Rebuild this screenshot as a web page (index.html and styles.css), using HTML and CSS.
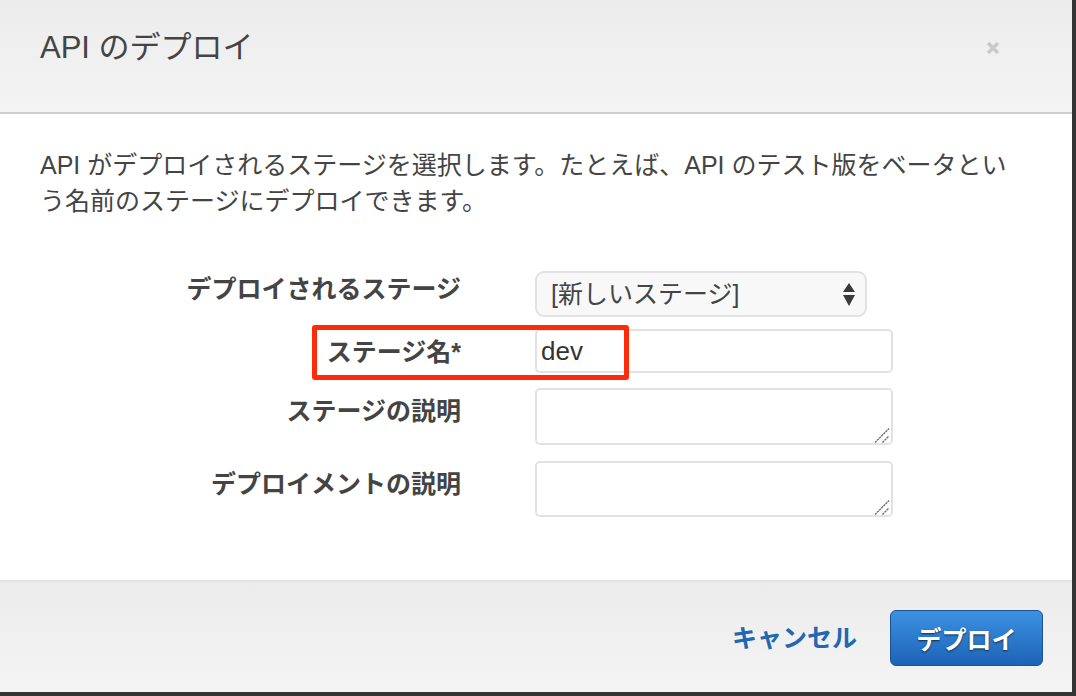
FILE: index.html
```html
<!DOCTYPE html>
<html lang="ja">
<head>
<meta charset="utf-8">
<title>API のデプロイ</title>
<link rel="stylesheet" href="styles.css">
</head>
<body>
<div class="modal">
  <header class="modal-header">
    <h1 class="modal-title">API のデプロイ</h1>
    <span class="close" aria-label="閉じる">
      <svg width="14" height="14" viewBox="0 0 14 14"><path d="M2 2L12 12M12 2L2 12" stroke="#c9c9c9" stroke-width="3.4" stroke-linecap="butt"/></svg>
    </span>
  </header>
  <main class="modal-body">
    <p class="desc">API がデプロイされるステージを選択します。たとえば、API のテスト版をベータという名前のステージにデプロイできます。</p>
    <form class="form">
      <div class="form-row">
        <label class="form-label label-first">デプロイされるステージ</label>
        <div class="select-box">
          <span class="select-text">[新しいステージ]</span>
          <svg class="select-arrows" width="12" height="23" viewBox="0 0 12 23"><path d="M6 0L12 9H0Z M0 12H12L6 23Z" fill="#3a3a3a"/></svg>
        </div>
      </div>
      <div class="form-row row-name">
        <label class="form-label">ステージ名*</label>
        <input class="text-input" type="text" value="dev">
      </div>
      <div class="form-row row-desc">
        <label class="form-label">ステージの説明</label>
        <div class="area-wrap">
          <textarea class="text-area"></textarea>
          <svg class="grip" width="16" height="16" viewBox="0 0 16 16"><path d="M1 15.5L15 1.5M8.5 15.5L15 9" stroke="#6a6a6a" stroke-width="1.4" stroke-dasharray="2.2 0.8"/></svg>
        </div>
      </div>
      <div class="form-row row-deploy-desc">
        <label class="form-label">デプロイメントの説明</label>
        <div class="area-wrap">
          <textarea class="text-area area-last"></textarea>
          <svg class="grip" width="16" height="16" viewBox="0 0 16 16"><path d="M1 15.5L15 1.5M8.5 15.5L15 9" stroke="#6a6a6a" stroke-width="1.4" stroke-dasharray="2.2 0.8"/></svg>
        </div>
      </div>
      <div class="highlight"></div>
    </form>
  </main>
  <footer class="modal-footer">
    <a class="cancel" href="#">キャンセル</a>
    <button class="deploy" type="button">デプロイ</button>
  </footer>
</div>
</body>
</html>
```

FILE: styles.css
```css
html, body {
  margin: 0;
  padding: 0;
}
body {
  width: 1076px;
  height: 696px;
  background: #343434;
  overflow: hidden;
  font-family: "Liberation Sans", "Noto Sans CJK JP", sans-serif;
  color: #444;
}
.modal {
  width: 1072px;
  height: 692px;
  background: #fff;
  display: flex;
  flex-direction: column;
}
.modal-header {
  height: 112px;
  flex: none;
  border-bottom: 2px solid #cfcfcf;
  background: linear-gradient(#ececec, #f4f4f4);
  display: flex;
  align-items: flex-start;
  justify-content: space-between;
  padding: 0 72px 0 40px;
}
.modal-title {
  margin: 28px 0 0;
  font-size: 31px;
  line-height: 40px;
  font-weight: normal;
  color: #444;
}
.close {
  margin-top: 41px;
  width: 14px;
  height: 14px;
  display: block;
}
.close svg {
  display: block;
}
.modal-body {
  flex: 1;
  padding: 33px 40px 0;
}
.desc {
  margin: 0 0 52px;
  max-width: 980px;
  font-size: 25px;
  line-height: 36px;
  color: #444;
}
.form {
  position: relative;
  display: flex;
  flex-direction: column;
}
.form-row {
  display: flex;
  align-items: flex-start;
  gap: 74px;
}
.row-name {
  margin-top: 12px;
}
.row-desc {
  margin-top: 15px;
}
.row-deploy-desc {
  margin-top: 16px;
}
.form-label {
  width: 421px;
  flex: none;
  text-align: right;
  font-weight: bold;
  font-size: 25px;
  line-height: 32px;
  padding-top: 7px;
  color: #444;
}
.label-first {
  padding-top: 2px;
}
.select-box {
  box-sizing: border-box;
  width: 332px;
  height: 46px;
  border: 2px solid #e2e2e2;
  border-radius: 9px;
  background: #f8f8f8;
  display: flex;
  align-items: center;
  justify-content: space-between;
  padding: 0 10px 0 14px;
}
.select-text {
  font-size: 25px;
  color: #444;
  line-height: 30px;
}
.select-arrows {
  display: block;
  margin-top: 1px;
}
.text-input {
  box-sizing: border-box;
  width: 358px;
  height: 44px;
  border: 2px solid #e2e2e2;
  border-radius: 5px;
  padding: 0 4px;
  margin: 0;
  font-family: "Liberation Sans", sans-serif;
  font-size: 26px;
  color: #333;
  outline: none;
  background: #fff;
}
.area-wrap {
  position: relative;
  width: 358px;
}
.text-area {
  box-sizing: border-box;
  width: 358px;
  height: 57px;
  border: 2px solid #e2e2e2;
  border-radius: 5px;
  margin: 0;
  padding: 4px;
  font-family: "Liberation Sans", sans-serif;
  font-size: 20px;
  background: #fff;
  display: block;
  resize: none;
}
.area-last {
  height: 56px;
}
.grip {
  position: absolute;
  right: 3px;
  bottom: 2px;
  display: block;
}
.highlight {
  position: absolute;
  left: 272px;
  top: 54px;
  width: 317px;
  height: 55px;
  box-sizing: border-box;
  border: 5px solid #fb2b0b;
  border-radius: 3px;
  pointer-events: none;
}
.modal-footer {
  height: 110px;
  flex: none;
  border-top: 2px solid #e3e3e3;
  background: linear-gradient(#ececec, #f4f4f4);
  display: flex;
  align-items: center;
  justify-content: flex-end;
  gap: 33px;
  padding-right: 29px;
}
.cancel {
  font-size: 25px;
  font-weight: bold;
  color: #2167b1;
  text-decoration: none;
  margin-top: -3px;
}
.deploy {
  box-sizing: border-box;
  width: 153px;
  height: 56px;
  border: 1px solid #1b5394;
  border-radius: 6px;
  background: linear-gradient(#3c91e3, #1d63b6);
  color: #fff;
  font-family: "Liberation Sans", "Noto Sans CJK JP", sans-serif;
  font-size: 25px;
  font-weight: bold;
  text-shadow: 0 1px 2px rgba(0, 0, 0, 0.65);
  padding: 0;
  margin-top: 1px;
}
```
